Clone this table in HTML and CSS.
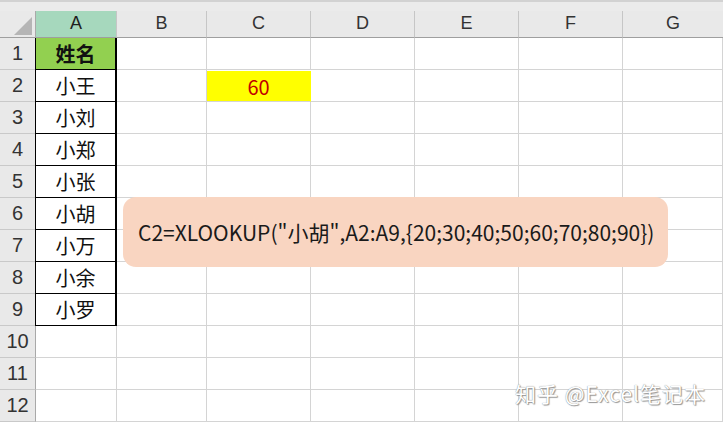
FILE: index.html
```html
<!DOCTYPE html>
<html lang="zh">
<head>
<meta charset="utf-8">
<link rel="stylesheet" href="styles.css">
</head>
<body>
<div class="page">
  <div class="sheet">
    <div class="strip"></div>
    <div class="corner"><svg width="36" height="27" viewBox="0 0 36 27"><polygon points="32,6 32,24 14,24" fill="#b5b5b5"/></svg></div>
    <div class="ch ch-sel">A</div><div class="ch">B</div><div class="ch">C</div><div class="ch">D</div><div class="ch">E</div><div class="ch">F</div><div class="ch ch-last">G</div>

    <div class="rh">1</div><div class="c a head">姓名</div><div class="c"></div><div class="c"></div><div class="c"></div><div class="c"></div><div class="c"></div><div class="c"></div>
    <div class="rh">2</div><div class="c a">小王</div><div class="c"></div><div class="c hit">60</div><div class="c"></div><div class="c"></div><div class="c"></div><div class="c"></div>
    <div class="rh">3</div><div class="c a">小刘</div><div class="c"></div><div class="c"></div><div class="c"></div><div class="c"></div><div class="c"></div><div class="c"></div>
    <div class="rh">4</div><div class="c a">小郑</div><div class="c"></div><div class="c"></div><div class="c"></div><div class="c"></div><div class="c"></div><div class="c"></div>
    <div class="rh">5</div><div class="c a">小张</div><div class="c"></div><div class="c"></div><div class="c"></div><div class="c"></div><div class="c"></div><div class="c"></div>
    <div class="rh">6</div><div class="c a">小胡</div><div class="c"></div><div class="c"></div><div class="c"></div><div class="c"></div><div class="c"></div><div class="c"></div>
    <div class="rh">7</div><div class="c a">小万</div><div class="c"></div><div class="c"></div><div class="c"></div><div class="c"></div><div class="c"></div><div class="c"></div>
    <div class="rh">8</div><div class="c a">小余</div><div class="c"></div><div class="c"></div><div class="c"></div><div class="c"></div><div class="c"></div><div class="c"></div>
    <div class="rh">9</div><div class="c a">小罗</div><div class="c"></div><div class="c"></div><div class="c"></div><div class="c"></div><div class="c"></div><div class="c"></div>
    <div class="rh">10</div><div class="c"></div><div class="c"></div><div class="c"></div><div class="c"></div><div class="c"></div><div class="c"></div><div class="c"></div>
    <div class="rh">11</div><div class="c"></div><div class="c"></div><div class="c"></div><div class="c"></div><div class="c"></div><div class="c"></div><div class="c"></div>
    <div class="rh">12</div><div class="c"></div><div class="c"></div><div class="c"></div><div class="c"></div><div class="c"></div><div class="c"></div><div class="c"></div>
  </div>
  <div class="note">C2=XLOOKUP("小胡",A2:A9,{20;30;40;50;60;70;80;90})</div>
  <div class="mark">知乎 @Excel笔记本</div>
</div>
</body>
</html>
```
FILE: styles.css
```css
html, body {
  margin: 0;
  padding: 0;
  background: #ffffff;
}
.page {
  position: relative;
  width: 723px;
  height: 424px;
  overflow: hidden;
}
.sheet {
  display: grid;
  grid-template-columns: 36px 81px 90px 104px 104px 104px 104px 100px;
  grid-template-rows: 11px 27px repeat(12, 32px);
  font-family: "Liberation Sans", Arial, sans-serif;
}
.sheet > div {
  box-sizing: border-box;
}
.strip {
  grid-column: 1 / -1;
  background: #ebebeb;
  border-top: 2px solid #d2d2d2;
}
.corner {
  background: #e9e9e9;
  border-right: 1px solid #a9a9a9;
  border-bottom: 1px solid #9f9f9f;
  line-height: 0;
}
.ch {
  background: #e9e9e9;
  border-right: 1px solid #c6c6c6;
  border-bottom: 1px solid #9f9f9f;
  display: flex;
  align-items: center;
  justify-content: center;
  font-size: 18px;
  color: #333333;
  padding-bottom: 1px;
}
.ch-sel {
  background: #a6d8bd;
  color: #1f1f1f;
}
.ch-last {
  border-right: none;
}
.rh {
  background: #e9e9e9;
  border-right: 1px solid #a9a9a9;
  border-bottom: 1px solid #c9c9c9;
  display: flex;
  align-items: center;
  justify-content: center;
  font-size: 20px;
  color: #333333;
}
.c {
  background: #ffffff;
  border-right: 1px solid #d4d4d4;
  border-bottom: 1px solid #d4d4d4;
  display: flex;
  align-items: center;
  justify-content: center;
  font-family: "Noto Sans CJK SC", "Liberation Sans", sans-serif;
  font-size: 20px;
  color: #111111;
}
.c.a {
  border-right: 2px solid #000000;
  border-bottom: 1px solid #000000;
  border-left: 1px solid #000000;
  margin-left: -1px;
}
.c.head {
  background: #92d050;
  font-weight: bold;
}
.c.hit {
  background: #ffff00;
  color: #c00000;
  font-size: 20px;
  border-right-color: #ffff00;
  margin-top: 1px;
}
.note {
  position: absolute;
  left: 123px;
  top: 197px;
  width: 545px;
  height: 70px;
  box-sizing: border-box;
  padding-left: 15px;
  border-radius: 13px;
  background: #f9d5c1;
  display: flex;
  align-items: center;
  font-family: "Noto Sans CJK SC", "Liberation Sans", sans-serif;
  font-size: 21px;
  color: #1a1a1a;
  white-space: nowrap;
}
.mark {
  position: absolute;
  left: 515px;
  top: 378px;
  font-family: "Noto Sans CJK SC", "Liberation Sans", sans-serif;
  font-size: 21px;
  letter-spacing: 1px;
  color: #ffffff;
  text-shadow: 0 0 1px #777, 1px 1px 1px #999;
  white-space: nowrap;
}
```
